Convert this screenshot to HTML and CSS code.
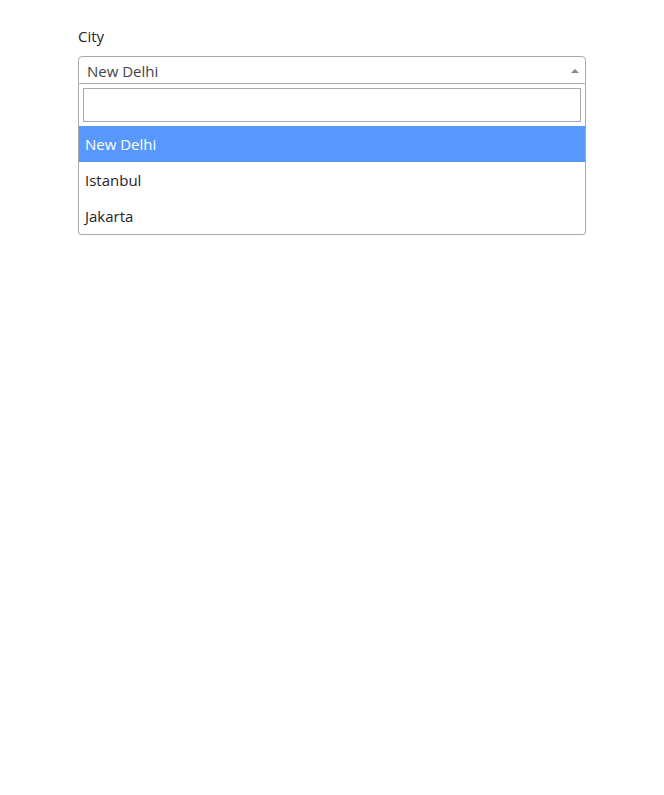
FILE: index.html
```html
<!DOCTYPE html>
<html>
<head>
<meta charset="utf-8">
<link rel="stylesheet" href="styles.css">
</head>
<body>
<div class="page">
  <label class="label">City</label>
  <div class="select">
    <div class="selection">
      <span class="rendered">New Delhi</span>
      <span class="arrow"></span>
    </div>
    <div class="dropdown">
      <div class="search"><input class="search-field" type="text"></div>
      <ul class="options">
        <li class="option highlighted">New Delhi</li>
        <li class="option">Istanbul</li>
        <li class="option">Jakarta</li>
      </ul>
    </div>
  </div>
</div>
</body>
</html>
```
FILE: styles.css
```css
html, body {
  margin: 0;
  padding: 0;
  background: #fff;
}
body {
  font-family: "Open Sans", "Noto Sans", sans-serif;
  font-size: 15px;
  line-height: 24px;
  color: #212529;
}
.page {
  padding: 24px 78px 0 78px;
}
.label {
  display: block;
  margin-bottom: 8px;
  height: 24px;
}
.select {
  width: 508px;
}
.selection {
  display: flex;
  align-items: center;
  justify-content: space-between;
  height: 26px;
  border: 1px solid #aaa;
  border-radius: 4px 4px 0 0;
  padding: 0 6px 0 8px;
}
.rendered {
  color: #444;
  line-height: 28px;
  padding-top: 2px;
}
.arrow {
  width: 0;
  height: 0;
  margin-top: 1px;
  border-left: 4px solid transparent;
  border-right: 4px solid transparent;
  border-bottom: 4px solid #888;
}
.dropdown {
  border: 1px solid #aaa;
  border-top: none;
  border-radius: 0 0 4px 4px;
}
.search {
  padding: 4px;
}
.search-field {
  display: block;
  box-sizing: border-box;
  width: 100%;
  height: 34px;
  border: 1px solid #aaa;
  padding: 4px;
  margin: 0;
  font: inherit;
  outline: none;
}
.options {
  list-style: none;
  margin: 0;
  padding: 0;
}
.option {
  padding: 6px;
  line-height: 24px;
}
.option.highlighted {
  background: #5897fb;
  color: #fff;
}
```
